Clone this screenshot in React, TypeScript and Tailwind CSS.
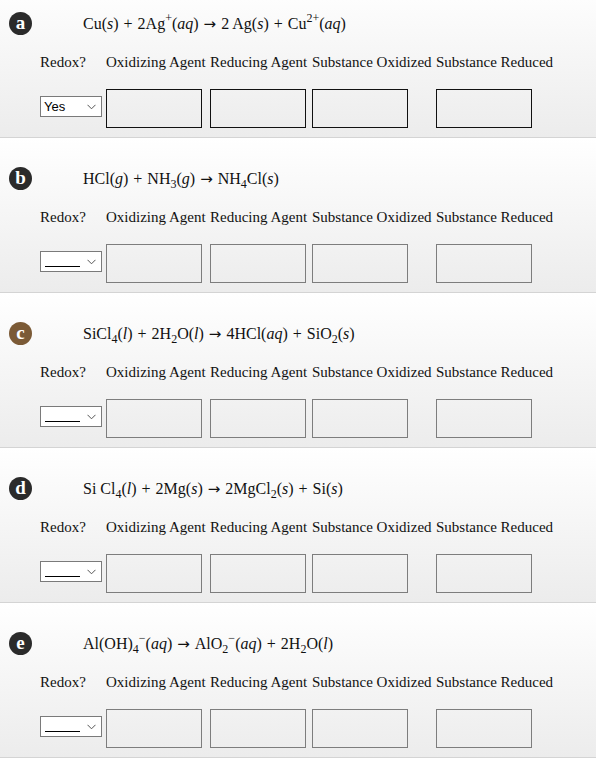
import type { ReactNode } from "react";

type Item = {
  letter: string;
  badge: string;
  answer: string;
  dark: boolean;
  eq: ReactNode;
};

const I = ({ children }: { children: ReactNode }) => <i className="italic">{children}</i>;
const Sub = ({ children }: { children: ReactNode }) => (
  <span className="relative top-[4px] text-[12px]">{children}</span>
);
const Sup = ({ children }: { children: ReactNode }) => (
  <span className="relative -top-[7px] text-[12px]">{children}</span>
);
const Plus = () => <span className="mx-[5px]">+</span>;
const Arrow = () => <span className="mx-[5px] font-['DejaVu_Sans',sans-serif] text-[15px]">→</span>;

const items: Item[] = [
  {
    letter: "a",
    badge: "bg-[#2b2b2b]",
    answer: "Yes",
    dark: true,
    eq: (
      <>
        Cu(<I>s</I>)<Plus />2Ag<Sup>+</Sup>(<I>aq</I>)<Arrow />2 Ag(<I>s</I>)<Plus />Cu<Sup>2+</Sup>(<I>aq</I>)
      </>
    ),
  },
  {
    letter: "b",
    badge: "bg-[#2b2b2b]",
    answer: "",
    dark: false,
    eq: (
      <>
        HCl(<I>g</I>)<Plus />NH<Sub>3</Sub>(<I>g</I>)<Arrow />NH<Sub>4</Sub>Cl(<I>s</I>)
      </>
    ),
  },
  {
    letter: "c",
    badge: "bg-[#7b5a36]",
    answer: "",
    dark: false,
    eq: (
      <>
        SiCl<Sub>4</Sub>(<I>l</I>)<Plus />2H<Sub>2</Sub>O(<I>l</I>)<Arrow />4HCl(<I>aq</I>)<Plus />SiO<Sub>2</Sub>(<I>s</I>)
      </>
    ),
  },
  {
    letter: "d",
    badge: "bg-[#2b2b2b]",
    answer: "",
    dark: false,
    eq: (
      <>
        Si Cl<Sub>4</Sub>(<I>l</I>)<Plus />2Mg(<I>s</I>)<Arrow />2MgCl<Sub>2</Sub>(<I>s</I>)<Plus />Si(<I>s</I>)
      </>
    ),
  },
  {
    letter: "e",
    badge: "bg-[#2b2b2b]",
    answer: "",
    dark: false,
    eq: (
      <>
        Al(OH)<Sub>4</Sub><Sup>−</Sup>(<I>aq</I>)<Arrow />AlO<Sub>2</Sub><Sup>−</Sup>(<I>aq</I>)<Plus />2H<Sub>2</Sub>O(<I>l</I>)
      </>
    ),
  },
];

const labels = ["Redox?", "Oxidizing Agent", "Reducing Agent", "Substance Oxidized", "Substance Reduced"];

const Select = ({ value }: { value: string }) => (
  <div className="mt-[7px] flex h-[21px] w-[62px] items-center border border-[#7a7a7a] bg-white pl-[3px] pr-[5px]">
    <div className="flex-1 font-['Liberation_Sans',sans-serif] text-[13px] leading-none text-black">
      {value ? value : <div className="mt-[10px] h-px w-[35px] bg-black ml-[1px]" />}
    </div>
    <svg width="9" height="6" viewBox="0 0 9 6" className="text-[#555]">
      <polyline points="0.5,0.8 4.5,4.8 8.5,0.8" fill="none" stroke="currentColor" strokeWidth="1" />
    </svg>
  </div>
);

const Box = ({ dark }: { dark: boolean }) => (
  <div className={`h-[39px] w-[96px] border ${dark ? "border-[#111]" : "border-[#7d7d7d]"}`} />
);

const Section = ({ item }: { item: Item }) => (
  <div className="flex h-[155px] flex-col border-b border-[#d4d4d4] bg-gradient-to-b from-white to-[#ececec] pt-[29px]">
    <div className="flex h-[22px] items-center">
      <div
        className={`ml-[9px] flex h-[23px] w-[23px] items-center justify-center rounded-full ${item.badge} font-['Liberation_Serif',serif] text-[19px] font-bold leading-none text-white`}
      >
        <span className="-mt-[2px]">{item.letter}</span>
      </div>
      <div className="ml-[51px] mt-[2px] whitespace-nowrap font-['Liberation_Serif',serif] text-[16px] leading-none text-[#111]">
        {item.eq}
      </div>
    </div>
    <div className="mt-[19px] grid h-[18px] grid-cols-[66px_104px_102px_124px_auto] pl-[40px] font-['Liberation_Serif',serif] text-[15px] leading-[18px] text-[#111]">
      {labels.map((l) => (
        <div key={l} className="whitespace-nowrap">
          {l}
        </div>
      ))}
    </div>
    <div className="mt-[18px] grid grid-cols-[66px_104px_102px_124px_auto] items-start pl-[40px]">
      <Select value={item.answer} />
      <Box dark={item.dark} />
      <Box dark={item.dark} />
      <Box dark={item.dark} />
      <Box dark={item.dark} />
    </div>
  </div>
);

export default function App() {
  return (
    <div className="h-[758px] w-[596px] overflow-hidden bg-white">
      <div className="-mt-[17px]">
        {items.map((it) => (
          <Section key={it.letter} item={it} />
        ))}
      </div>
    </div>
  );
}
